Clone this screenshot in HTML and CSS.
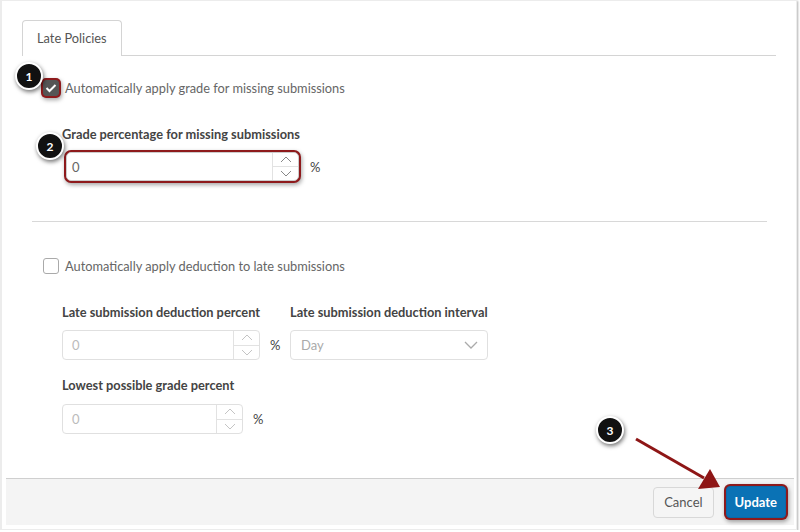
FILE: index.html
```html
<!DOCTYPE html>
<html lang="en">
<head>
  <meta charset="UTF-8">
  <title>Late Policies</title>
  <link rel="stylesheet" href="styles.css">
</head>
<body>
  <div class="dialog">
    <div class="content">
      <div class="tabs">
        <div class="tab">Late Policies</div>
      </div>

      <div class="panel">
        <label class="check-row first">
          <span class="checkbox checked callout">
            <svg width="12" height="10" viewBox="0 0 12 10"><polyline points="1.5,5 4.5,8 10.5,2" fill="none" stroke="#fff" stroke-width="2"/></svg>
          </span>
          <span>Automatically apply grade for missing submissions</span>
        </label>

        <div class="field">
          <div class="field-label">Grade percentage for missing submissions</div>
          <div class="input-row">
            <div class="num-input callout wide">
              <span class="value">0</span>
              <div class="spinner">
                <span><svg width="12" height="7" viewBox="0 0 12 7"><polyline points="1,6 6,1 11,6" fill="none" stroke="#888" stroke-width="1"/></svg></span>
                <span><svg width="12" height="7" viewBox="0 0 12 7"><polyline points="1,1 6,6 11,1" fill="none" stroke="#888" stroke-width="1"/></svg></span>
              </div>
            </div>
            <span class="unit">%</span>
          </div>
        </div>

        <hr class="divider">

        <label class="check-row second">
          <span class="checkbox"></span>
          <span>Automatically apply deduction to late submissions</span>
        </label>

        <div class="field-grid">
          <div>
            <div class="field-label">Late submission deduction percent</div>
            <div class="input-row">
              <div class="num-input disabled mid">
                <span class="value">0</span>
                <div class="spinner">
                  <span><svg width="12" height="7" viewBox="0 0 12 7"><polyline points="1,6 6,1 11,6" fill="none" stroke="#c4c4c4" stroke-width="1"/></svg></span>
                  <span><svg width="12" height="7" viewBox="0 0 12 7"><polyline points="1,1 6,6 11,1" fill="none" stroke="#c4c4c4" stroke-width="1"/></svg></span>
                </div>
              </div>
              <span class="unit">%</span>
            </div>
          </div>
          <div>
            <div class="field-label">Late submission deduction interval</div>
            <div class="select disabled">
              <span>Day</span>
              <svg width="14" height="8" viewBox="0 0 14 8"><polyline points="1,1 7,7 13,1" fill="none" stroke="#aaa" stroke-width="1.3"/></svg>
            </div>
          </div>
        </div>

        <div class="field lowest">
          <div class="field-label">Lowest possible grade percent</div>
          <div class="input-row">
            <div class="num-input disabled small">
              <span class="value">0</span>
              <div class="spinner">
                <span><svg width="12" height="7" viewBox="0 0 12 7"><polyline points="1,6 6,1 11,6" fill="none" stroke="#c4c4c4" stroke-width="1"/></svg></span>
                <span><svg width="12" height="7" viewBox="0 0 12 7"><polyline points="1,1 6,6 11,1" fill="none" stroke="#c4c4c4" stroke-width="1"/></svg></span>
              </div>
            </div>
            <span class="unit">%</span>
          </div>
        </div>
      </div>
    </div>

    <div class="footer">
      <button class="btn">Cancel</button>
      <button class="btn primary callout">Update</button>
    </div>

    <!-- annotation callouts -->
    <span class="badge b1">1</span>
    <span class="badge b2">2</span>
    <span class="badge b3">3</span>
    <svg class="arrow" width="800" height="532" viewBox="0 0 800 532">
      <line x1="636" y1="439" x2="704" y2="478" stroke="#8e1616" stroke-width="3"/>
      <polygon points="720,487 698,489 710,469" fill="#8e1616"/>
    </svg>
  </div>
</body>
</html>
```

FILE: styles.css
```css
body {
  margin: 0;
  font-family: Lato, 'Open Sans', sans-serif;
  background: #fff;
  color: #444;
}
.dialog {
  position: relative;
  width: 797px;
  height: 530px;
  box-sizing: border-box;
  border: 1px solid #ececec;
  border-left: 2px solid #ececec;
  box-shadow: 1px 1px 2px rgba(0,0,0,0.3);
  display: flex;
  flex-direction: column;
}
.content {
  flex: 1;
  padding: 19px 20px 0 20px;
}
.tabs {
  display: flex;
  border-bottom: 1px solid #d4d4d4;
  height: 35px;
}
.tab {
  height: 36px;
  box-sizing: border-box;
  padding: 0 14px;
  line-height: 35px;
  font-size: 12.8px;
  color: #555;
  background: #fff;
  border: 1px solid #d4d4d4;
  border-bottom: none;
  border-radius: 4px 4px 0 0;
}
.check-row {
  display: flex;
  align-items: center;
  gap: 6px;
  margin-left: 21px;
  font-size: 12.8px;
  color: #666;
  height: 18px;
}
.check-row.first { margin-top: 23px; }
.check-row.second { margin-top: 35px; }
.checkbox {
  width: 16px;
  height: 16px;
  box-sizing: border-box;
  border: 1px solid #aaa;
  border-radius: 3px;
  background: #fff;
  display: flex;
  align-items: center;
  justify-content: center;
}
.checkbox.checked {
  background: #555;
  border-color: #555;
}
.callout {
  box-shadow: 0 0 0 2px #8e1a1c, 1px 2px 4px 2px rgba(0,0,0,0.35);
}
.field {
  margin-left: 40px;
}
.field-label {
  font-size: 12.8px;
  font-weight: bold;
  color: #444;
  line-height: 18px;
  white-space: nowrap;
}
.field .field-label { margin-top: 28px; }
.input-row {
  display: flex;
  align-items: center;
  gap: 10px;
  margin-top: 9px;
}
.num-input {
  display: flex;
  height: 30px;
  box-sizing: border-box;
  border: 1px solid #ccc;
  border-radius: 4px;
  background: #fff;
  font-size: 13px;
}
.num-input .value {
  flex: 1;
  padding-left: 9px;
  line-height: 28px;
  color: #666;
}
.num-input.wide {
  width: 233px;
  height: 29px;
  margin-left: 4px;
  border-radius: 5px;
}
.num-input.wide .value { padding-left: 5px; }
.num-input.mid { width: 198px; }
.num-input.small { width: 181px; }
.spinner {
  width: 25px;
  border-left: 1px solid #e2e2e2;
  display: flex;
  flex-direction: column;
}
.spinner span {
  flex: 1;
  display: flex;
  align-items: center;
  justify-content: center;
}
.spinner span + span { border-top: 1px solid #e2e2e2; }
.disabled .value { color: #bbb; }
.disabled { border-color: #e0e0e0; }
.unit {
  font-size: 13px;
  color: #444;
}
.wide + .unit { margin-left: 1px; }
.divider {
  border: none;
  border-top: 1px solid #d8d8d8;
  margin: 40px 9px 0 10px;
}
.field-grid {
  display: grid;
  grid-template-columns: 228px 198px;
  margin-left: 40px;
  margin-top: 28px;
}
.field-grid .input-row { margin-top: 9px; }
.select {
  margin-top: 9px;
  height: 30px;
  box-sizing: border-box;
  border: 1px solid #e0e0e0;
  border-radius: 4px;
  display: flex;
  align-items: center;
  justify-content: space-between;
  padding: 0 9px 0 10px;
  font-size: 13px;
  color: #aaa;
}
.field.lowest .field-label { margin-top: 16px; }
.field.lowest .input-row { margin-top: 10px; }
.footer {
  height: 46px;
  margin: 0 2px 4px 4px;
  background: #f4f4f4;
  border-top: 1px solid #cfcfcf;
  display: flex;
  align-items: center;
  justify-content: flex-end;
  gap: 12px;
  padding-right: 8px;
}
.btn {
  font-family: Lato, sans-serif;
  font-size: 13px;
  height: 31px;
  padding: 0 10px;
  border: 1px solid #d8d8d8;
  border-radius: 4px;
  background: #f5f5f5;
  color: #555;
}
.btn.primary {
  background: #0a72b5;
  border-color: #0a6aa8;
  color: #fff;
  font-weight: bold;
  padding: 0 8px;
  height: 32px;
}
.badge {
  position: absolute;
  width: 24px;
  height: 24px;
  border-radius: 50%;
  background: #111;
  border: 2px solid #fff;
  box-shadow: 1px 2px 4px rgba(0,0,0,0.55);
  color: #fff;
  font-size: 12px;
  font-weight: bold;
  display: flex;
  align-items: center;
  justify-content: center;
}
.b1 { left: 13px; top: 61px; }
.b2 { left: 34px; top: 131px; }
.b3 { left: 594px; top: 415px; }
.arrow {
  position: absolute;
  left: -2px;
  top: -1px;
  pointer-events: none;
}
```
